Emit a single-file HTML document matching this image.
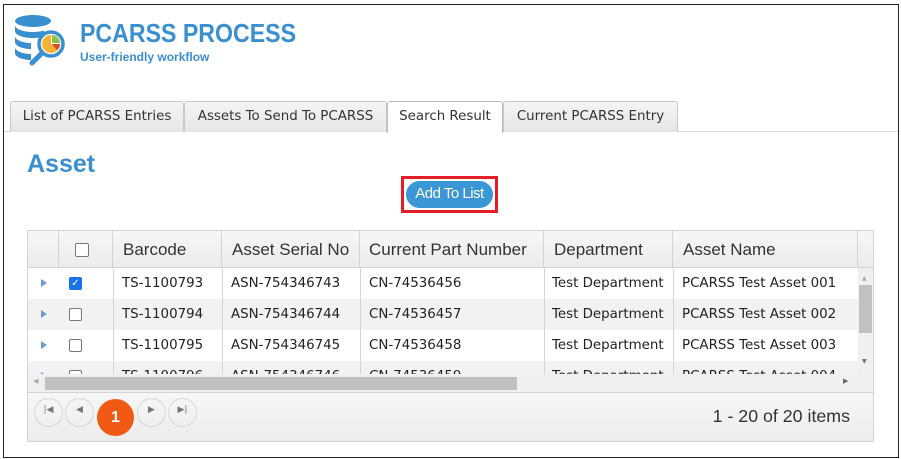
<!DOCTYPE html>
<html><head><style>
*{box-sizing:border-box;margin:0;padding:0}
body{width:901px;height:459px;background:#fff;position:relative;overflow:hidden;font-family:"DejaVu Sans","Liberation Sans",sans-serif;color:#222}
.frame{position:absolute;left:3px;top:4px;width:896px;height:454px;border:1px solid #222}
.abs{position:absolute}
.tab{position:absolute;top:101px;height:31px;background:linear-gradient(#f4f4f4,#e6e6e6);border:1px solid #c8c8c8;border-bottom:none;border-radius:3px 3px 0 0;font-size:13.4px;line-height:30px;text-align:center;color:#333}
.grid{position:absolute;left:27px;top:230px;width:847px;height:212px;border:1px solid #d4d4d4;background:#fff;overflow:hidden}
.hd{position:absolute;top:0;height:37px;border-right:1px solid #d4d4d4;border-bottom:1px solid #d4d4d4;background:linear-gradient(#f6f6f6,#ececec);font-size:17px;line-height:38px;padding-left:10px;color:#333;font-family:"Liberation Sans","DejaVu Sans",sans-serif;white-space:nowrap;overflow:hidden}
.row{position:absolute;left:0;width:830px;height:31px;font-size:13.4px;line-height:31px}
.c{position:absolute;top:0;height:31px;padding-left:8px;white-space:nowrap;overflow:hidden}
.bl{border-left:1px solid #d4d4d4}
.cb{position:absolute;width:13px;height:13px;border:1px solid #777;border-radius:2px;background:#fff}
.arr{position:absolute;left:13px;width:0;height:0;border-top:4px solid transparent;border-bottom:4px solid transparent;border-left:6px solid #6c9bd6}
.pb{position:absolute;top:6px;width:29px;height:29px;border:1px solid #d8d8d8;border-radius:50%;font-size:9px;color:#777;text-align:center;line-height:22px}
</style></head><body>
<div class="frame"></div>
<svg class="abs" style="left:13px;top:14px" width="60" height="52" viewBox="0 0 60 52">
<ellipse cx="20" cy="7" rx="18" ry="6" fill="#3a8fd0"/>
<path d="M2 9 v8 c0 4 8 7 18 7 c4 0 8-.5 11-1.5 v-6 c-3 1-7 1.5-11 1.5 c-10 0-18-3-18-7z" fill="#3a8fd0"/>
<path d="M2 20 v8 c0 4 8 7 16 7 v-6 c-8 0-16-3-16-7z" fill="#3a8fd0"/>
<path d="M2 31 v8 c0 4 8 7 16 7 v-6 c-8 0-16-3-16-7z" fill="#3a8fd0"/>
<circle cx="38" cy="30" r="12" fill="#fff" stroke="#3a8fd0" stroke-width="3.5"/>
<path d="M38 30 L38 21 A9 9 0 1 0 47 31 Z" fill="#f2b232"/>
<path d="M39 29 L39 21 A8 8 0 0 1 47 29 Z" fill="#8bc34a"/>
<path d="M39 30 L47 30 A8 8 0 0 1 44 36 Z" fill="#d84a2a"/>
<path d="M29 39 L19 49" stroke="#3a8fd0" stroke-width="5" stroke-linecap="round"/>
</svg>
<div class="abs" style="left:80px;top:18px;font-size:26px;font-weight:bold;color:#3a8fd0;font-family:'Liberation Sans',sans-serif;transform:scaleX(0.89);transform-origin:left">PCARSS PROCESS</div>
<div class="abs" style="left:80px;top:50px;font-size:12px;font-weight:bold;color:#3a8fd0;font-family:'Liberation Sans',sans-serif">User-friendly workflow</div>
<div class="abs" style="left:4px;top:131px;width:894px;height:1px;background:#ddd"></div>
<div class="tab" style="left:10px;width:174px">List of PCARSS Entries</div>
<div class="tab" style="left:184px;width:203px">Assets To Send To PCARSS</div>
<div class="tab" style="left:387px;width:116px;background:#fff;height:32px;border-color:#bbb">Search Result</div>
<div class="tab" style="left:503px;width:175px">Current PCARSS Entry</div>
<div class="abs" style="left:27px;top:150px;font-size:25px;font-weight:bold;color:#3a8fd0;font-family:'Liberation Sans',sans-serif">Asset</div>
<div class="abs" style="left:401px;top:176px;width:97px;height:37px;border:3px solid #e41e26"></div>
<div class="abs" style="left:406px;top:181px;width:87px;height:27px;border-radius:14px;background:#3a96d4;color:#fff;font-family:'Liberation Sans',sans-serif;font-size:15px;line-height:26px;text-align:center;letter-spacing:-0.5px">Add To List</div>
<div class="grid">
<div class="hd" style="left:0;width:31px"></div>
<div class="hd" style="left:31px;width:54px"><div class="cb" style="left:16px;top:12px;width:14px;height:14px"></div></div>
<div class="hd" style="left:85px;width:109px">Barcode</div>
<div class="hd" style="left:194px;width:138px">Asset Serial No</div>
<div class="hd" style="left:332px;width:184px;padding-left:9px">Current Part Number</div>
<div class="hd" style="left:516px;width:129px">Department</div>
<div class="hd" style="left:645px;width:185px">Asset Name</div>
<div class="hd" style="left:830px;width:17px;border-right:none"></div>

<div class="row" style="top:37px;background:#fff"><div class="arr" style="top:11px"></div><div class="cb" style="left:41px;top:9px;background:#1a73e8;border-color:#1a73e8;color:#fff;font-size:10px;line-height:11px;text-align:center">✓</div><div class="c bl" style="left:85px">TS-1100793</div><div class="c bl" style="left:194px">ASN-754346743</div><div class="c bl" style="left:332px">CN-74536456</div><div class="c bl" style="left:516px;padding-left:7px">Test Department</div><div class="c bl" style="left:645px;padding-left:8px">PCARSS Test Asset 001</div></div>
<div class="row" style="top:68px;background:#f2f2f2"><div class="arr" style="top:11px"></div><div class="cb" style="left:41px;top:9px"></div><div class="c bl" style="left:85px">TS-1100794</div><div class="c bl" style="left:194px">ASN-754346744</div><div class="c bl" style="left:332px">CN-74536457</div><div class="c bl" style="left:516px;padding-left:7px">Test Department</div><div class="c bl" style="left:645px;padding-left:8px">PCARSS Test Asset 002</div></div>
<div class="row" style="top:99px;background:#fff"><div class="arr" style="top:11px"></div><div class="cb" style="left:41px;top:9px"></div><div class="c bl" style="left:85px">TS-1100795</div><div class="c bl" style="left:194px">ASN-754346745</div><div class="c bl" style="left:332px">CN-74536458</div><div class="c bl" style="left:516px;padding-left:7px">Test Department</div><div class="c bl" style="left:645px;padding-left:8px">PCARSS Test Asset 003</div></div>
<div class="row" style="top:130px;height:13px;overflow:hidden;background:#f2f2f2"><div class="arr" style="top:11px"></div><div class="cb" style="left:41px;top:9px"></div><div class="c bl" style="left:85px">TS-1100796</div><div class="c bl" style="left:194px">ASN-754346746</div><div class="c bl" style="left:332px">CN-74536459</div><div class="c bl" style="left:516px;padding-left:7px">Test Department</div><div class="c bl" style="left:645px;padding-left:8px">PCARSS Test Asset 004</div></div>
<div class="abs" style="left:830px;top:37px;width:17px;height:106px;background:#f0f0f0"></div>
<div class="abs" style="left:831px;top:54px;width:13px;height:48px;background:#c1c1c1"></div>
<div class="abs" style="left:834px;top:44px;font-size:6px;color:#aaa">▲</div>
<div class="abs" style="left:834px;top:127px;font-size:6px;color:#666">▼</div>
<div class="abs" style="left:0;top:143px;width:847px;height:18px;background:#f0f0f0"></div>
<div class="abs" style="left:17px;top:146px;width:472px;height:13px;background:#c1c1c1"></div>
<div class="abs" style="left:5px;top:146px;font-size:7px;color:#aaa">◀</div>
<div class="abs" style="left:815px;top:146px;font-size:7px;color:#666">▶</div>
<div class="abs" style="left:0;top:161px;width:847px;height:51px;border-top:1px solid #d4d4d4;background:linear-gradient(#f6f6f6,#ececec)"></div>
<div class="pb" style="left:6px;top:167px">|◀</div>
<div class="pb" style="left:37px;top:167px">◀</div>
<div class="abs" style="left:69px;top:168px;width:37px;height:37px;border-radius:50%;background:#f05a14;color:#fff;font-family:'Liberation Sans',sans-serif;font-weight:bold;font-size:16px;line-height:37px;text-align:center">1</div>
<div class="pb" style="left:109px;top:167px">▶</div>
<div class="pb" style="left:140px;top:167px">▶|</div>
<div class="abs" style="right:23px;top:175px;font-size:17.8px;color:#333;font-family:'Liberation Sans','DejaVu Sans',sans-serif">1 - 20 of 20 items</div>
</div>
</body></html>
